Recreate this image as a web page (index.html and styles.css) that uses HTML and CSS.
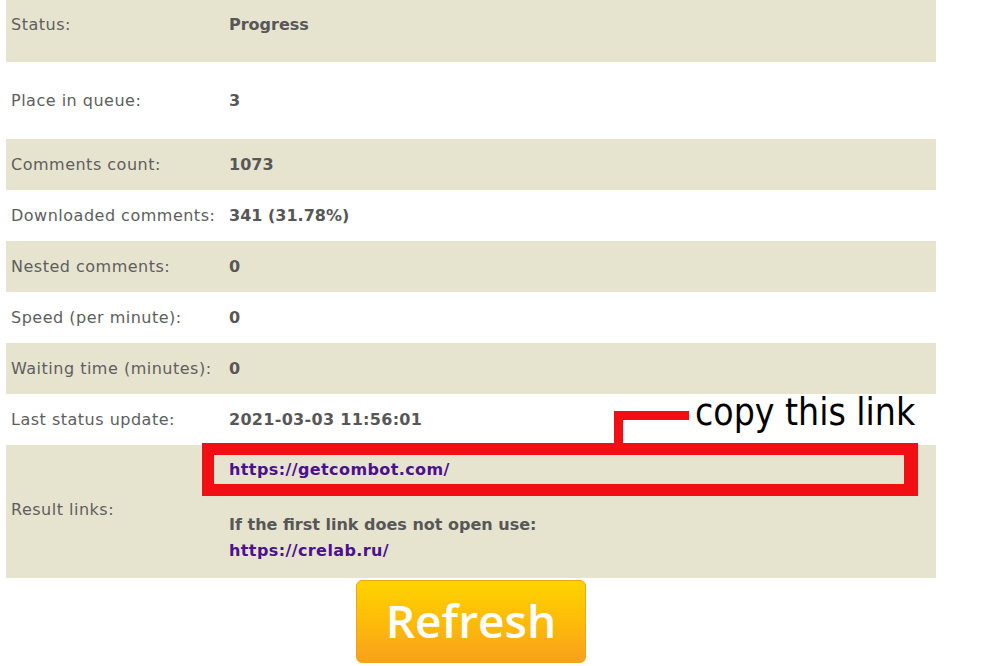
FILE: index.html
```html
<!DOCTYPE html>
<html lang="en">
<head>
    <meta charset="UTF-8">
    <title>Export status</title>
    <link rel="stylesheet" href="styles.css">
</head>
<body>
    <div class="page">
        <table class="status-table">
            <tr class="row-first">
                <td class="label">Status:</td>
                <td class="value">Progress</td>
            </tr>
            <tr class="row-tall">
                <td class="label">Place in queue:</td>
                <td class="value">3</td>
            </tr>
            <tr>
                <td class="label">Comments count:</td>
                <td class="value">1073</td>
            </tr>
            <tr>
                <td class="label">Downloaded comments:</td>
                <td class="value">341 (31.78%)</td>
            </tr>
            <tr>
                <td class="label">Nested comments:</td>
                <td class="value">0</td>
            </tr>
            <tr>
                <td class="label">Speed (per minute):</td>
                <td class="value">0</td>
            </tr>
            <tr>
                <td class="label">Waiting time (minutes):</td>
                <td class="value">0</td>
            </tr>
            <tr>
                <td class="label">Last status update:</td>
                <td class="value date">2021-03-03 11:56:01</td>
            </tr>
            <tr class="row-links">
                <td class="label">Result links:</td>
                <td class="value">
                    <div><a href="#">https://getcombot.com/</a></div>
                    <div class="fallback">
                        If the first link does not open use:<br>
                        <a href="#">https://crelab.ru/</a>
                    </div>
                </td>
            </tr>
        </table>

        <div class="actions">
            <button class="refresh-btn">Refresh</button>
        </div>

        <!-- annotation drawn over the screenshot -->
        <div class="mark-box"></div>
        <div class="mark-stem"></div>
        <div class="mark-arm"></div>
        <div class="mark-text">copy this link</div>
    </div>
</body>
</html>
```

FILE: styles.css
```css
* {
    box-sizing: border-box;
}

body {
    margin: 0;
    background: #ffffff;
    font-family: 'DejaVu Sans', Verdana, sans-serif;
    font-size: 16px;
    color: #5e5e5e;
}

.page {
    position: relative;
    width: 986px;
    height: 666px;
    padding-left: 6px;
    overflow: hidden;
}

.status-table {
    width: 930px;
    border-collapse: collapse;
}

.status-table tr:nth-child(odd) {
    background: #e6e3cf;
}

.status-table td {
    padding: 15px 5px;
    line-height: 21px;
    vertical-align: middle;
}

.status-table .label {
    width: 218px;
    white-space: nowrap;
    letter-spacing: 0.5px;
}

.status-table .value {
    font-weight: bold;
    color: #575757;
}

.status-table .date {
    letter-spacing: 0.3px;
}

.row-first td {
    padding-top: 14px;
    padding-bottom: 27px;
}

.row-tall td {
    padding-top: 28px;
    padding-bottom: 28px;
}

.row-links td.label {
    padding-bottom: 19px;
}

.row-links td.value {
    padding-top: 12px;
    padding-bottom: 14px;
    line-height: 26px;
}

.row-links a {
    color: #4c1190;
    text-decoration: none;
    letter-spacing: 0.4px;
}

.fallback {
    margin-top: 29px;
}

.actions {
    display: flex;
    justify-content: center;
    width: 930px;
    padding-top: 2px;
}

.refresh-btn {
    width: 230px;
    height: 83px;
    border: 1px solid #f3a51a;
    border-radius: 6px;
    background: linear-gradient(to bottom, #ffd300 0%, #fdb90b 55%, #f9a01c 100%);
    color: #ffffff;
    font-family: 'Open Sans', sans-serif;
    font-weight: 600;
    font-size: 46px;
    line-height: 1;
    padding-bottom: 4px;
    cursor: pointer;
}

.mark-box {
    position: absolute;
    left: 202px;
    top: 443px;
    width: 716px;
    height: 53px;
    border: 12px solid #f10f14;
    border-right-width: 14px;
}

.mark-stem {
    position: absolute;
    left: 614px;
    top: 411px;
    width: 9px;
    height: 34px;
    background: #f10f14;
}

.mark-arm {
    position: absolute;
    left: 614px;
    top: 411px;
    width: 75px;
    height: 9px;
    background: #f10f14;
}

.mark-text {
    position: absolute;
    left: 695px;
    top: 391px;
    font-family: 'DejaVu Sans Condensed', 'DejaVu Sans', sans-serif;
    font-size: 37px;
    line-height: 44px;
    color: #000000;
    white-space: nowrap;
}
```
